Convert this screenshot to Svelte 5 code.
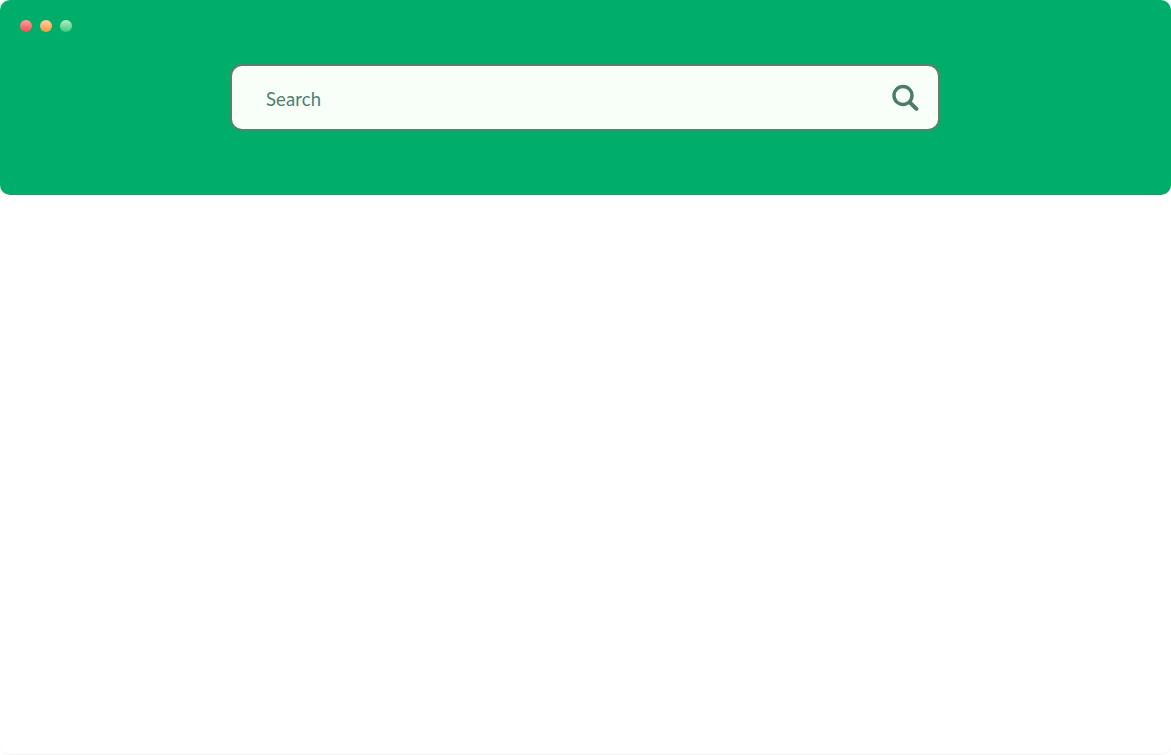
<script>
  let query = "";
  const lights = ["red", "orange", "green"];
</script>

<div class="window">
  <header class="top">
    <div class="lights">
      {#each lights as light}
        <span class="light {light}"></span>
      {/each}
    </div>
    <div class="search">
      <input type="text" placeholder="Search" bind:value={query} />
      <svg width="28" height="28" viewBox="0 0 28 28" fill="none" stroke="#4a7c66" stroke-linecap="round">
        <circle cx="12" cy="11.5" r="9" stroke-width="3.4" />
        <path d="M18.8 18.3 L25.4 24.8" stroke-width="4" />
      </svg>
    </div>
  </header>
</div>

<style>
  :global(body) {
    background: #fff;
  }

  .window {
    height: 754px;
    border-bottom: 1px solid #f2f2f2;
    border-radius: 0 0 10px 10px;
    background: #fff;
    font-family: Lato, "Open Sans", sans-serif;
  }

  .top {
    height: 195px;
    box-sizing: border-box;
    padding: 20px 20px 0;
    border-radius: 10px;
    background: #00ad69;
  }

  .lights {
    display: flex;
    gap: 8px;
    height: 44px;
  }

  .light {
    width: 12px;
    height: 12px;
    border-radius: 50%;
  }

  .red {
    background: linear-gradient(#f6a5a5, #fc4a4a);
  }

  .orange {
    background: linear-gradient(#fcd2ac, #fd9638);
  }

  .green {
    background: linear-gradient(#b5edc8, #3fc878);
  }

  .search {
    display: flex;
    align-items: center;
    justify-content: space-between;
    box-sizing: border-box;
    width: 710px;
    height: 67px;
    margin-left: 210px;
    padding: 0 19px 0 34px;
    border: 2px solid #5d7f70;
    border-radius: 12px;
    background: #f8fff9;
  }

  input {
    flex: 1;
    border: none;
    outline: none;
    padding: 2px 0 0;
    background: transparent;
    font: inherit;
    font-size: 18.5px;
    letter-spacing: 0.1px;
    color: #4a7c66;
  }

  input::placeholder {
    color: #4f7f6b;
    opacity: 1;
  }
</style>
